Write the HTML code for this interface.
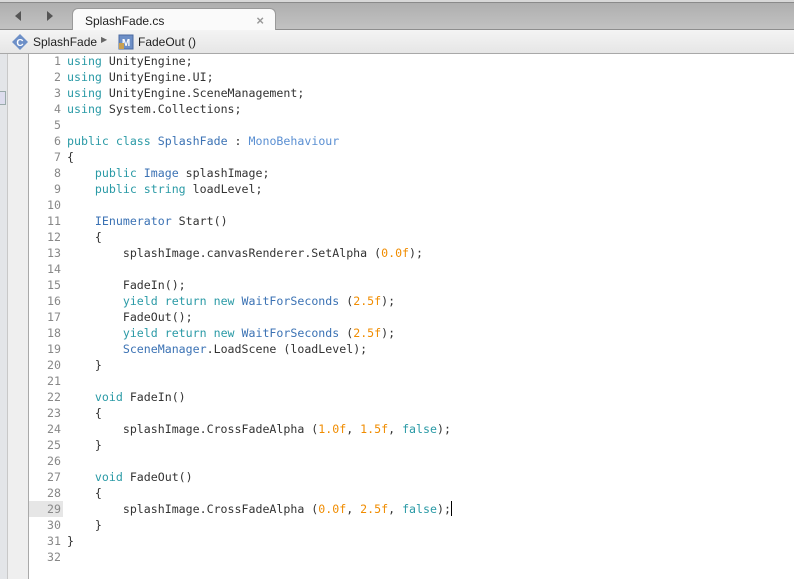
<!DOCTYPE html>
<html><head><meta charset="utf-8"><style>
*{margin:0;padding:0;box-sizing:border-box}
body{width:794px;height:579px;overflow:hidden;background:#fff;position:relative;font-family:"Liberation Sans",sans-serif}
#top{position:absolute;left:0;top:0;width:794px;height:30px;background:linear-gradient(#aeaeae,#c2c2c2);border-top:2px solid #d8d8d8;border-bottom:1px solid #8e8e8e}
#top:before{content:"";position:absolute;left:0;right:0;top:0;height:1px;background:#8a8a8a}
.arr{position:absolute;top:9px;width:0;height:0;border-top:5px solid transparent;border-bottom:5px solid transparent}
#tab{position:absolute;left:72px;top:6px;width:204px;height:25px;background:#fafafa;border:1px solid #9a9a9a;border-bottom:none;border-radius:6px 6px 0 0;font-size:12px;color:#222;padding:5px 0 0 12px}
#tab .x{position:absolute;right:11px;top:4px;color:#999;font-size:13px;font-weight:bold}
#crumb{position:absolute;left:0;top:30px;width:794px;height:24px;background:linear-gradient(#f4f4f4,#e6e6e6);border-bottom:1px solid #a8a8a8;font-size:12px;color:#222}
#strip{position:absolute;left:0;top:54px;width:8px;height:525px;background:#e3e5e8;border-right:1px solid #c8c8c8}
#gut{position:absolute;left:8px;top:54px;width:21px;height:525px;background:#efefef;border-right:1px solid #a9a9a9}
#code{position:absolute;left:29px;top:53px;font-family:"DejaVu Sans Mono","Liberation Mono",monospace;font-size:11.6px;line-height:16px;color:#333}
.l{height:16px;white-space:pre}
.n{display:inline-block;width:38px;text-align:right;color:#888;padding-right:6px}
.hl .n{background:#e6e6e6;width:34px;margin-right:4px;padding-right:2px}
.k{color:#2a9aa6}.t{color:#3b72b4}.m{color:#5a8fd2}.o{color:#f08c00}
.cur{display:inline-block;width:1px;height:15px;background:#000;vertical-align:-3px}
</style></head><body>
<div id="top">
<div class="arr" style="left:15px;border-right:6px solid #555"></div>
<div class="arr" style="left:47px;border-left:6px solid #555"></div>
<div id="tab">SplashFade.cs<span class="x">×</span></div>
</div>
<div id="crumb">
<svg style="position:absolute;left:12px;top:4px" width="16" height="16"><path d="M8 0L16 8L8 16L0 8Z" fill="#6d8fc7"/><text x="8" y="12" font-size="10" fill="#fff" text-anchor="middle" font-family="Liberation Sans" font-weight="bold">C</text></svg>
<span style="position:absolute;left:33px;top:5px">SplashFade</span>
<span style="position:absolute;left:101px;top:5px;font-size:8px;color:#666">▶</span>
<svg style="position:absolute;left:118px;top:4px" width="16" height="16"><rect x="1" y="1" width="14" height="14" fill="#6d8fc7" stroke="#4a6aa0"/><text x="8" y="12" font-size="10" fill="#fff" text-anchor="middle" font-family="Liberation Sans" font-weight="bold">M</text><rect x="1" y="9" width="5" height="6" fill="#c9a050"/></svg>
<span style="position:absolute;left:138px;top:5px">FadeOut ()</span>
</div>
<div id="strip"><div style="position:absolute;left:0;top:37px;width:6px;height:14px;border:1px solid #9aa;border-left:none;background:#dde"></div></div>
<div id="gut"></div>
<div id="code"><div class="l"><span class="n">1</span><span class="k">using</span> UnityEngine;</div><div class="l"><span class="n">2</span><span class="k">using</span> UnityEngine.UI;</div><div class="l"><span class="n">3</span><span class="k">using</span> UnityEngine.SceneManagement;</div><div class="l"><span class="n">4</span><span class="k">using</span> System.Collections;</div><div class="l"><span class="n">5</span></div><div class="l"><span class="n">6</span><span class="k">public class</span> <span class="t">SplashFade</span> : <span class="m">MonoBehaviour</span></div><div class="l"><span class="n">7</span>{</div><div class="l"><span class="n">8</span>    <span class="k">public</span> <span class="t">Image</span> splashImage;</div><div class="l"><span class="n">9</span>    <span class="k">public string</span> loadLevel;</div><div class="l"><span class="n">10</span></div><div class="l"><span class="n">11</span>    <span class="t">IEnumerator</span> Start()</div><div class="l"><span class="n">12</span>    {</div><div class="l"><span class="n">13</span>        splashImage.canvasRenderer.SetAlpha (<span class="o">0.0f</span>);</div><div class="l"><span class="n">14</span></div><div class="l"><span class="n">15</span>        FadeIn();</div><div class="l"><span class="n">16</span>        <span class="k">yield return new</span> <span class="t">WaitForSeconds</span> (<span class="o">2.5f</span>);</div><div class="l"><span class="n">17</span>        FadeOut();</div><div class="l"><span class="n">18</span>        <span class="k">yield return new</span> <span class="t">WaitForSeconds</span> (<span class="o">2.5f</span>);</div><div class="l"><span class="n">19</span>        <span class="t">SceneManager</span>.LoadScene (loadLevel);</div><div class="l"><span class="n">20</span>    }</div><div class="l"><span class="n">21</span></div><div class="l"><span class="n">22</span>    <span class="k">void</span> FadeIn()</div><div class="l"><span class="n">23</span>    {</div><div class="l"><span class="n">24</span>        splashImage.CrossFadeAlpha (<span class="o">1.0f</span>, <span class="o">1.5f</span>, <span class="k">false</span>);</div><div class="l"><span class="n">25</span>    }</div><div class="l"><span class="n">26</span></div><div class="l"><span class="n">27</span>    <span class="k">void</span> FadeOut()</div><div class="l"><span class="n">28</span>    {</div><div class="l hl"><span class="n">29</span>        splashImage.CrossFadeAlpha (<span class="o">0.0f</span>, <span class="o">2.5f</span>, <span class="k">false</span>);<span class="cur"></span></div><div class="l"><span class="n">30</span>    }</div><div class="l"><span class="n">31</span>}</div><div class="l"><span class="n">32</span></div></div>
</body></html>
